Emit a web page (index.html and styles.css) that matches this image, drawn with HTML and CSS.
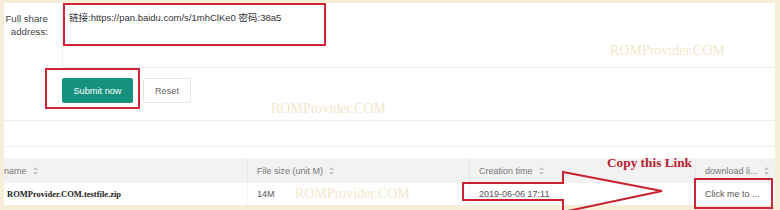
FILE: index.html
```html
<!DOCTYPE html>
<html lang="en">

<head>
  <meta charset="UTF-8" />
  <title>Share link</title>
  <link rel="stylesheet" href="styles.css">
</head>

<body>

  <div class="page">
    <div class="form-row">
      <label class="form-label" for="share">Full share address:</label>
      <div class="share-box" id="share">链接:https://pan.baidu.com/s/1mhClKe0 密码:38a5</div>
    </div>

    <div class="button-row">
      <button class="btn btn-primary">Submit now</button>
      <button class="btn btn-default">Reset</button>
    </div>

    <div class="sep sep-short"></div>
    <div class="sep sep-tall"></div>

    <div class="table">
      <div class="th first">name <span class="sort"><svg width="5" height="8" viewBox="0 0 5 8"><path d="M2.5 0L5 3H0z M2.5 8L5 5H0z" fill="#c4c4c4"/></svg></span></div>
      <div class="th">File size (unit M) <span class="sort"><svg width="5" height="8" viewBox="0 0 5 8"><path d="M2.5 0L5 3H0z M2.5 8L5 5H0z" fill="#c4c4c4"/></svg></span></div>
      <div class="th">Creation time <span class="sort"><svg width="5" height="8" viewBox="0 0 5 8"><path d="M2.5 0L5 3H0z M2.5 8L5 5H0z" fill="#c4c4c4"/></svg></span></div>
      <div class="th">download li... <span class="sort"><svg width="5" height="8" viewBox="0 0 5 8"><path d="M2.5 0L5 3H0z M2.5 8L5 5H0z" fill="#c4c4c4"/></svg></span></div>

      <div class="td first file-name">ROMProvider.COM.testfile.zip</div>
      <div class="td">14M</div>
      <div class="td">2019-06-06 17:11</div>
      <div class="td">Click me to ...</div>
    </div>
  </div>

  <!-- watermarks -->
  <div class="watermark wm-1">ROMProvider.COM</div>
  <div class="watermark wm-2">ROMProvider.COM</div>
  <div class="watermark wm-3">ROMProvider.COM</div>

  <!-- red annotations -->
  <div class="mark mark-text"></div>
  <div class="mark mark-submit"></div>
  <div class="mark mark-link"></div>
  <div class="copy-note">Copy this Link</div>
  <svg class="arrow" width="780" height="210" viewBox="0 0 780 210">
    <polygon points="463,183 563,183 563,172 662,191 563,212 563,200 463,200" fill="none" stroke="#c9212f" stroke-width="2" />
  </svg>

</body>

</html>
```

FILE: styles.css
```css
body {
  margin: 0;
  width: 780px;
  height: 210px;
  overflow: hidden;
  position: relative;
  background-color: #f6eed8;
  font-family: "Liberation Sans", Arial, "Noto Sans CJK SC", sans-serif;
  font-size: 9px;
  color: #333;
}

.page {
  margin: 3px 5px 0 4px;
  height: 202px;
  background-color: #fff;
}

/* form */
.form-row {
  display: flex;
  height: 65px;
}

.form-label {
  width: 58px;
  box-sizing: border-box;
  padding: 9px 14px 0 0;
  text-align: right;
  font-size: 9.7px;
  line-height: 13px;
  color: #444;
}

.share-box {
  flex: 1;
  border-left: 1px solid #eee;
  border-bottom: 1px solid #eee;
  padding: 9px 6px;
  font-size: 9.5px;
  line-height: 12px;
  color: #333;
}

.button-row {
  display: flex;
  gap: 10px;
  margin-top: 10px;
  padding-left: 58px;
}

.btn {
  height: 25px;
  font-family: inherit;
  font-size: 9.2px;
  border-radius: 2px;
  cursor: pointer;
}

.btn-primary {
  width: 71px;
  background-color: #16917d;
  color: #fff;
  border: none;
}

.btn-default {
  width: 48px;
  background-color: #fff;
  color: #666;
  border: 1px solid #e6e6e6;
}

.sep {
  border-bottom: 1px solid #eee;
}

.sep-short {
  height: 17px;
}

.sep-tall {
  height: 25px;
  margin-bottom: 11px;
}

/* table */
.table {
  display: grid;
  grid-template-columns: 243px 222px 226px 1fr;
}

.th,
.td {
  display: flex;
  align-items: center;
  padding-left: 9px;
  white-space: nowrap;
  overflow: hidden;
}

.th {
  height: 25px;
  background-color: #f2f2f2;
  color: #777;
  border-left: 1px solid #e6e6e6;
}

.td {
  height: 22px;
  color: #555;
  border-left: 1px solid #f6f6f6;
}

.th.first,
.td.first {
  border-left: none;
  padding-left: 0;
}

.td.first {
  padding-left: 3px;
}

.sort {
  display: inline-flex;
  margin-left: 6px;
}

.file-name {
  font-family: "Liberation Serif", "Times New Roman", serif;
  font-weight: bold;
  font-size: 8.5px;
  color: #222;
}

/* watermark */
.watermark {
  position: absolute;
  font-family: "Liberation Serif", "Times New Roman", serif;
  font-size: 14px;
  line-height: 14px;
  color: #f1e8c9;
  white-space: nowrap;
}

.wm-1 {
  left: 610px;
  top: 44px;
}

.wm-2 {
  left: 271px;
  top: 102px;
}

.wm-3 {
  left: 295px;
  top: 187px;
}

/* red annotations */
.mark {
  position: absolute;
  border: 2px solid #cf2338;
  box-sizing: border-box;
}

.mark-text {
  left: 63px;
  top: 3px;
  width: 263px;
  height: 43px;
}

.mark-submit {
  left: 45px;
  top: 68px;
  width: 95px;
  height: 41px;
}

.mark-link {
  left: 694px;
  top: 178px;
  width: 79px;
  height: 31px;
}

.copy-note {
  position: absolute;
  left: 607px;
  top: 156px;
  font-family: "Liberation Serif", "Times New Roman", serif;
  font-weight: bold;
  font-size: 13.3px;
  line-height: 13px;
  color: #b8202f;
}

.arrow {
  position: absolute;
  left: 0;
  top: 0;
  pointer-events: none;
}
```
